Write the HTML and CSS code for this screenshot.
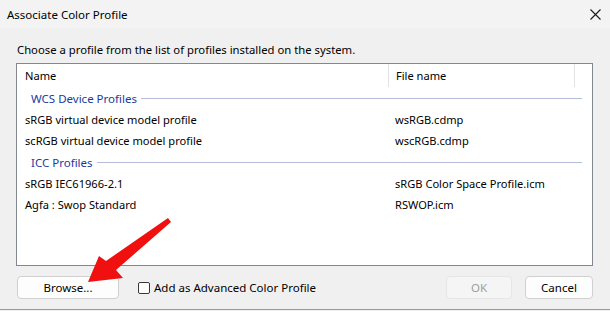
FILE: index.html
```html
<!DOCTYPE html>
<html lang="en">
<head>
    <meta charset="UTF-8">
    <title>Associate Color Profile</title>
    <link rel="stylesheet" href="styles.css">
</head>
<body>
    <div class="dialog">
        <div class="titlebar">
            <span class="title">Associate Color Profile</span>
            <svg class="close" width="11" height="11" viewBox="0 0 11 11">
                <path d="M0.5 0.5 L10.5 10.5 M10.5 0.5 L0.5 10.5" stroke="#1a1a1a" stroke-width="1.1" fill="none"/>
            </svg>
        </div>

        <div class="content">
            <p class="intro">Choose a profile from the list of profiles installed on the system.</p>

            <div class="listbox">
                <div class="list-header">
                    <div class="col-name">Name</div>
                    <div class="col-file">File name</div>
                    <div class="col-rest"></div>
                </div>

                <div class="group"><span>WCS Device Profiles</span></div>
                <div class="row"><div class="col-name">sRGB virtual device model profile</div><div class="col-file">wsRGB.cdmp</div></div>
                <div class="row"><div class="col-name">scRGB virtual device model profile</div><div class="col-file">wscRGB.cdmp</div></div>

                <div class="group"><span>ICC Profiles</span></div>
                <div class="row"><div class="col-name">sRGB IEC61966-2.1</div><div class="col-file">sRGB Color Space Profile.icm</div></div>
                <div class="row"><div class="col-name">Agfa : Swop Standard</div><div class="col-file">RSWOP.icm</div></div>
            </div>

            <div class="footer">
                <button class="btn btn-browse">Browse...</button>
                <label class="check">
                    <span class="box"></span>
                    Add as Advanced Color Profile
                </label>
                <div class="spacer"></div>
                <button class="btn btn-ok" disabled>OK</button>
                <button class="btn btn-cancel">Cancel</button>
            </div>
        </div>
    </div>

    <svg class="arrow" width="610" height="311" viewBox="0 0 610 311">
        <polygon points="88,282 99,256 106,261 168,218 171,222 116,270 123,278" fill="#f01010"/>
    </svg>
</body>
</html>
```

FILE: styles.css
```css
* {
    box-sizing: border-box;
}

body {
    margin: 0;
    width: 610px;
    height: 311px;
    overflow: hidden;
    background-color: #f0f0f0;
    font-family: 'Noto Sans', 'Open Sans', sans-serif;
    font-size: 11.1px;
    color: #000;
    position: relative;
}

.dialog {
    height: 310px;
    border-bottom: 1px solid #9a9a9a;
}

.titlebar {
    height: 28px;
    background-color: #f3f3f3;
    display: flex;
    align-items: center;
    justify-content: space-between;
    padding: 0 9px 0 7px;
}

.title {
    font-size: 11.5px;
}

.content {
    padding: 0 17px 0 16px;
}

.intro {
    margin: 0;
    height: 35px;
    line-height: 16px;
    padding: 14px 0 0 1px;
    font-size: 11.3px;
}

.listbox {
    background-color: #fff;
    border: 1px solid #828790;
    height: 203px;
}

.list-header {
    display: flex;
    height: 23px;
    align-items: center;
}

.col-name {
    width: 371px;
    padding-left: 8px;
}

.col-file {
    flex: 1;
}

.list-header .col-file {
    border-left: 1px solid #e3e3e3;
    height: 23px;
    line-height: 23px;
    padding-left: 7px;
    flex: none;
    width: 186px;
}

.list-header .col-rest {
    border-left: 1px solid #e3e3e3;
    height: 23px;
}

.group {
    height: 22px;
    display: flex;
    align-items: center;
    padding: 0 10px 0 14px;
    color: #1c3a9c;
    font-size: 11.5px;
}

.group::after {
    content: "";
    flex: 1;
    height: 1px;
    margin-left: 4px;
    background-color: #b4bedb;
}

.row {
    display: flex;
    height: 21px;
    align-items: center;
}

.row .col-file {
    padding-left: 7px;
}

.footer {
    display: flex;
    align-items: center;
    margin-top: 10px;
    height: 23px;
}

.btn {
    font-family: inherit;
    font-size: 11.5px;
    height: 23px;
    border: 1px solid #d0d0d0;
    border-radius: 4px;
    background-color: #fdfdfd;
    color: #000;
    padding: 0;
}

.btn-browse {
    width: 102px;
    margin-left: 1px;
}

.check {
    display: flex;
    align-items: center;
    margin-left: 19px;
    font-size: 11.5px;
}

.box {
    width: 12px;
    height: 12px;
    border: 1px solid #3a3a3a;
    border-radius: 2px;
    background-color: #fff;
    margin-right: 4px;
}

.spacer {
    flex: 1;
}

.btn-ok {
    width: 66px;
    background-color: #f5f5f5;
    border-color: #e6e6e6;
    color: #a0a0a0;
}

.btn-cancel {
    width: 68px;
    margin-left: 13px;
}

.arrow {
    position: absolute;
    left: 0;
    top: 0;
    pointer-events: none;
}
```
